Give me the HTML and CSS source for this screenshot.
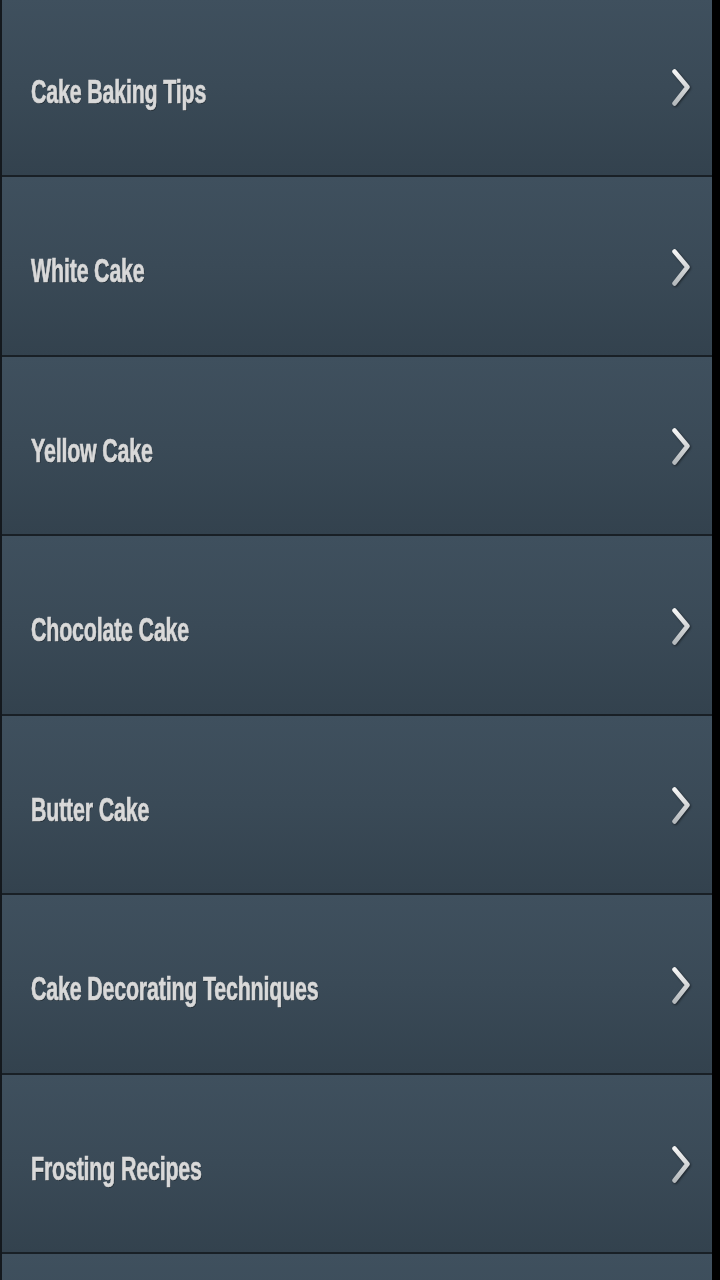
FILE: index.html
```html
<!DOCTYPE html>
<html>
<head>
<meta charset="utf-8">
<link rel="stylesheet" href="styles.css">
</head>
<body>
<svg class="defs" width="0" height="0"><defs><linearGradient id="g" x1="0" y1="0" x2="0" y2="1"><stop offset="0" stop-color="#f4f4f4"/><stop offset="1" stop-color="#b5babd"/></linearGradient></defs></svg>
<ul class="list">
  <li class="item"><span class="label">Cake Baking Tips</span><svg class="chev" viewBox="0 0 20 40"><path d="M3.5 3.5 L16.5 19 L3.5 35.5" fill="none" stroke="url(#g)" stroke-width="4.5" stroke-linecap="round" stroke-linejoin="round"/></svg></li>
  <li class="item"><span class="label">White Cake</span><svg class="chev" viewBox="0 0 20 40"><path d="M3.5 3.5 L16.5 19 L3.5 35.5" fill="none" stroke="url(#g)" stroke-width="4.5" stroke-linecap="round" stroke-linejoin="round"/></svg></li>
  <li class="item"><span class="label">Yellow Cake</span><svg class="chev" viewBox="0 0 20 40"><path d="M3.5 3.5 L16.5 19 L3.5 35.5" fill="none" stroke="url(#g)" stroke-width="4.5" stroke-linecap="round" stroke-linejoin="round"/></svg></li>
  <li class="item"><span class="label">Chocolate Cake</span><svg class="chev" viewBox="0 0 20 40"><path d="M3.5 3.5 L16.5 19 L3.5 35.5" fill="none" stroke="url(#g)" stroke-width="4.5" stroke-linecap="round" stroke-linejoin="round"/></svg></li>
  <li class="item"><span class="label">Butter Cake</span><svg class="chev" viewBox="0 0 20 40"><path d="M3.5 3.5 L16.5 19 L3.5 35.5" fill="none" stroke="url(#g)" stroke-width="4.5" stroke-linecap="round" stroke-linejoin="round"/></svg></li>
  <li class="item"><span class="label">Cake Decorating Techniques</span><svg class="chev" viewBox="0 0 20 40"><path d="M3.5 3.5 L16.5 19 L3.5 35.5" fill="none" stroke="url(#g)" stroke-width="4.5" stroke-linecap="round" stroke-linejoin="round"/></svg></li>
  <li class="item"><span class="label">Frosting Recipes</span><svg class="chev" viewBox="0 0 20 40"><path d="M3.5 3.5 L16.5 19 L3.5 35.5" fill="none" stroke="url(#g)" stroke-width="4.5" stroke-linecap="round" stroke-linejoin="round"/></svg></li>
  <li class="item item-partial"></li>
</ul>
</body>
</html>
```
FILE: styles.css
```css
html, body {
  margin: 0;
  padding: 0;
  background: #000;
  height: 1280px;
  overflow: hidden;
}
.defs {
  position: absolute;
}
.list {
  list-style: none;
  margin: -2.5px 0 0 0;
  padding: 0;
  width: 710px;
  border-left: 2px solid #14191e;
}
.item {
  height: 177.5px;
  border-bottom: 2px solid #192026;
  background: linear-gradient(to bottom, #3f505e 0%, #3a4a57 50%, #33424e 100%);
  display: flex;
  align-items: center;
  justify-content: space-between;
  padding: 0 21px 0 29px;
  box-sizing: content-box;
}
.label {
  font-family: "Liberation Sans", Arial, sans-serif;
  font-weight: bold;
  font-size: 34px;
  color: #d9d9d9;
  -webkit-text-stroke: 0.7px #d9d9d9;
  text-shadow: 1px 1px 0 rgba(20, 26, 32, 0.6);
  letter-spacing: -0.3px;
  margin-top: 10px;
  transform: scaleX(0.63);
  transform-origin: left center;
  white-space: nowrap;
}
.chev {
  width: 20px;
  height: 40px;
  margin-top: 4px;
  filter: drop-shadow(1px 1px 1px #1c242b);
}
```
